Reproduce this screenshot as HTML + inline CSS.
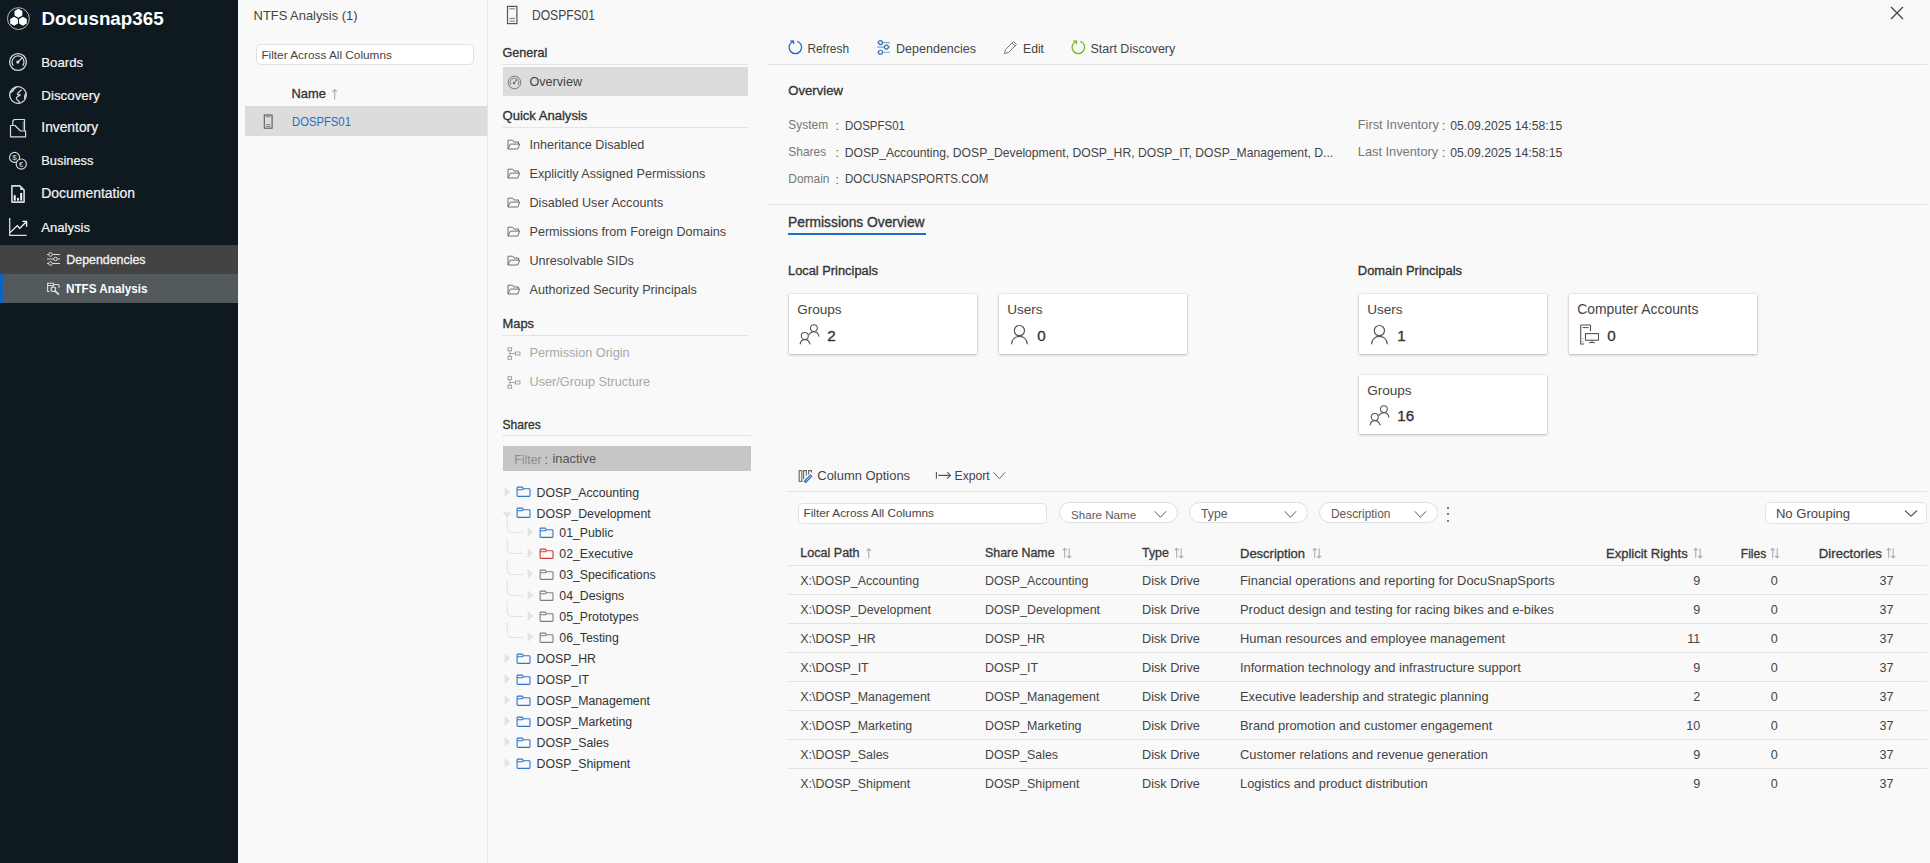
<!DOCTYPE html>
<html><head><meta charset="utf-8"><title>Docusnap365 - NTFS Analysis</title>
<style>
html,body{margin:0;padding:0;width:1930px;height:863px;overflow:hidden;background:#f9f9f9;font-family:"Liberation Sans",sans-serif;}
.t{position:absolute;white-space:nowrap;line-height:1;}
.r{position:absolute;display:block;}
</style></head><body>
<div class="r" style="left:0px;top:0px;width:238px;height:863px;background:#0e1a1f"></div>
<svg class="r" style="left:6px;top:6px" width="26" height="26" viewBox="0 0 26 26" fill="none"><circle cx="12.4" cy="12.6" r="10.9" stroke="#b8bcbe" stroke-width="1"/>
<path d="M12.40 2.80 L16.30 5.05 L16.30 9.55 L12.40 11.80 L8.50 9.55 L8.50 5.05Z" fill="#fff"/><path d="M8.10 10.80 L12.00 13.05 L12.00 17.55 L8.10 19.80 L4.20 17.55 L4.20 13.05Z" fill="#fff"/><path d="M16.90 10.80 L20.80 13.05 L20.80 17.55 L16.90 19.80 L13.00 17.55 L13.00 13.05Z" fill="#fff"/></svg>
<div class="t" style="left:41.5px;top:9.99px;font-size:18.8px;color:#ffffff;font-weight:700;">Docusnap365</div>
<div class="t" style="left:41.3px;top:55.93px;font-size:13.2px;color:#f4f4f4;font-weight:400;-webkit-text-stroke:0.2px currentColor;">Boards</div>
<div class="t" style="left:41.3px;top:88.80px;font-size:13.35px;color:#f4f4f4;font-weight:400;-webkit-text-stroke:0.2px currentColor;">Discovery</div>
<div class="t" style="left:41.3px;top:121.42px;font-size:13.8px;color:#f4f4f4;font-weight:400;-webkit-text-stroke:0.2px currentColor;">Inventory</div>
<div class="t" style="left:41.3px;top:155.22px;font-size:12.85px;color:#f4f4f4;font-weight:400;-webkit-text-stroke:0.2px currentColor;">Business</div>
<div class="t" style="left:41.3px;top:187.29px;font-size:13.95px;color:#f4f4f4;font-weight:400;-webkit-text-stroke:0.2px currentColor;">Documentation</div>
<div class="t" style="left:41.3px;top:221.01px;font-size:13.1px;color:#f4f4f4;font-weight:400;-webkit-text-stroke:0.2px currentColor;">Analysis</div>
<svg class="r" style="left:8px;top:52px" width="20" height="20" viewBox="0 0 20 20" fill="none"><circle cx="10" cy="10" r="8.4" stroke="#d9dcdd" stroke-width="1.3"/>
<path d="M5.3 13.7 A6 6 0 1 1 14.7 13.7" stroke="#d9dcdd" stroke-width="1.2"/>
<path d="M9.6 10.3 L14.8 5.4" stroke="#d9dcdd" stroke-width="1.3"/><circle cx="9.8" cy="10.1" r="1.6" fill="#d9dcdd"/></svg>
<svg class="r" style="left:8px;top:85px" width="20" height="20" viewBox="0 0 20 20" fill="none"><circle cx="10" cy="10" r="8.3" stroke="#d9dcdd" stroke-width="1.3"/>
<path d="M2.3 7.6 C3.8 7 5.2 6.3 5.6 4.6 C6 3.4 7.2 2.6 8.6 2" stroke="#d9dcdd" stroke-width="1.5"/>
<path d="M13.6 4.8 C12.2 5.8 11 7.2 9.6 8.6 C8.9 9.4 9.8 10.2 11 9.7 C12 9.4 12.6 9.9 11.6 10.6 C10.2 11.5 8.6 11.8 8.3 13.2 C8 14.8 10.2 15.2 11 16.4 C11.5 17.2 11.5 17.8 11.6 18.3" stroke="#d9dcdd" stroke-width="1.2"/>
<path d="M17.8 8.6 C16.6 10 16.2 12.2 17.2 14.2" stroke="#d9dcdd" stroke-width="1.2"/></svg>
<svg class="r" style="left:9px;top:118px" width="18" height="20" viewBox="0 0 18 20" fill="none"><path d="M1.5 7.5 H6 L11.5 13 H16.6 V18.8 H1.5 Z" stroke="#d9dcdd" stroke-width="1.2" stroke-linejoin="round"/>
<path d="M3.8 7.5 V3 L5.3 1.5 H15.5 V13" stroke="#d9dcdd" stroke-width="1.2" stroke-linejoin="round"/><path d="M14.2 3.2 V12.5" stroke="#8a8f91" stroke-width="0.9"/></svg>
<svg class="r" style="left:8px;top:151px" width="20" height="20" viewBox="0 0 20 20" fill="none"><circle cx="6.56" cy="6.4" r="5" stroke="#d9dcdd" stroke-width="1.1"/>
<circle cx="13.27" cy="13.05" r="5.1" stroke="#d9dcdd" stroke-width="1.1" fill="#0e1a1f"/>
<text x="6.6" y="9.3" font-size="8" text-anchor="middle" fill="#d9dcdd" font-family="Liberation Sans">$</text>
<text x="13.1" y="15.9" font-size="7.6" text-anchor="middle" fill="#d9dcdd" font-family="Liberation Sans">€</text></svg>
<svg class="r" style="left:10px;top:184px" width="16" height="20" viewBox="0 0 16 20" fill="none"><path d="M1.9 1.9 H9.8 L14.1 6.1 V18.1 H1.9 Z" stroke="#d9dcdd" stroke-width="1.6" stroke-linejoin="round"/>
<path d="M10.2 2.6 L13.4 5.9 H10.2 Z" fill="#d9dcdd"/>
<rect x="3.7" y="11.2" width="2" height="5.4" fill="#fff"/><rect x="7" y="13.9" width="1.9" height="2.7" fill="#fff"/><rect x="10.2" y="9" width="2" height="7.6" fill="#fff"/></svg>
<svg class="r" style="left:8px;top:217px" width="20" height="20" viewBox="0 0 20 20" fill="none"><path d="M1.7 1 V18.3 H18.7" stroke="#d9dcdd" stroke-width="1.3"/>
<path d="M2 15.6 L9.35 8.65 L11.75 11.4 L18.1 5" stroke="#fff" stroke-width="1.3"/><path d="M14.5 4.4 H18.6 V9.7" stroke="#fff" stroke-width="1.3"/></svg>
<div class="r" style="left:0px;top:245px;width:238px;height:29px;background:#434343"></div>
<div class="r" style="left:0px;top:274px;width:238px;height:29px;background:#535a5d"></div>
<div class="r" style="left:0px;top:274px;width:3px;height:29px;background:#0b63c4"></div>
<svg class="r" style="left:46px;top:252px" width="15" height="15" viewBox="0 0 15 15" fill="none"><path d="M1 2.5 H14 M1 7 H14 M1 11.5 H14" stroke="#d9dcdd" stroke-width="1"/>
<circle cx="4.5" cy="2.5" r="1.8" fill="#434343" stroke="#d9dcdd" stroke-width="1"/>
<circle cx="9.5" cy="7" r="1.8" fill="#434343" stroke="#d9dcdd" stroke-width="1"/>
<circle cx="4.5" cy="11.5" r="1.8" fill="#434343" stroke="#d9dcdd" stroke-width="1"/></svg>
<div class="t" style="left:66.3px;top:254.20px;font-size:12.4px;color:#f2f2f2;font-weight:400;-webkit-text-stroke:0.32px currentColor;">Dependencies</div>
<svg class="r" style="left:46px;top:281px" width="15" height="15" viewBox="0 0 15 15" fill="none"><path d="M3.6 10.5 H1.6 V2.2 H7.5 V4.5 H1.6" stroke="#d9dcdd" stroke-width="1.1" stroke-linejoin="round"/>
<path d="M7.5 3.5 H12 Q13 3.5 13 4.5 V6.8" stroke="#d9dcdd" stroke-width="1.1"/>
<circle cx="7.3" cy="8.2" r="2.3" stroke="#d9dcdd" stroke-width="1.1"/><path d="M9 10 L12.4 13.1" stroke="#d9dcdd" stroke-width="1.8" stroke-linecap="round"/></svg>
<div class="t" style="left:66.3px;top:282.79px;font-size:12.3px;color:#ffffff;font-weight:700;transform:scaleX(0.951);transform-origin:0 0;">NTFS Analysis</div>
<div class="r" style="left:238px;top:0px;width:249px;height:863px;background:#f9f9f9"></div>
<div class="r" style="left:487px;top:0px;width:1px;height:863px;background:#e6e6e6"></div>
<div class="t" style="left:253.6px;top:9.78px;font-size:12.9px;color:#444;font-weight:400;">NTFS Analysis (1)</div>
<div class="r" style="left:255.5px;top:43.5px;width:218px;height:21px;background:#fff;border:1px solid #e2e2e2;border-radius:5px;box-sizing:border-box"></div>
<div class="t" style="left:261.4px;top:49.91px;font-size:11.8px;color:#444;font-weight:400;">Filter Across All Columns</div>
<div class="t" style="left:291.5px;top:87.58px;font-size:12.9px;color:#333333;font-weight:400;-webkit-text-stroke:0.32px currentColor;">Name</div>
<svg class="r" style="left:330px;top:88px" width="9" height="12" viewBox="0 0 9 12" fill="none"><path d="M4.7 11.5 V1.6 M2.5 3.8 L4.7 1.5 L6.9 3.8" stroke="#b0b0b0" stroke-width="1.2"/></svg>
<div class="r" style="left:245px;top:106px;width:242px;height:29.6px;background:#dcdcdc"></div>
<svg class="r" style="left:263px;top:113.5px" width="10" height="15" viewBox="0 0 10 15" fill="none"><rect x="1.3" y="1" width="7.8" height="13.2" stroke="#5a5a5a" stroke-width="1.1"/><path d="M3 2.7 H7.4 M3 10.6 H7.4 M3 12.4 H7.4" stroke="#777" stroke-width="0.9"/></svg>
<div class="t" style="left:291.5px;top:116.20px;font-size:12.4px;color:#1f6fc6;font-weight:400;transform:scaleX(0.91);transform-origin:0 0;">DOSPFS01</div>
<svg class="r" style="left:506px;top:5px" width="12" height="20" viewBox="0 0 12 20" fill="none"><rect x="1.5" y="1.4" width="9.4" height="17.2" stroke="#555" stroke-width="1.2"/><path d="M3.4 3.8 H9 M3.4 13.4 H9 M3.4 16.1 H9" stroke="#777" stroke-width="1"/></svg>
<div class="t" style="left:531.7px;top:7.68px;font-size:14.2px;color:#444;font-weight:400;transform:scaleX(0.85);transform-origin:0 0;">DOSPFS01</div>
<div class="t" style="left:502.5px;top:46.53px;font-size:12.6px;color:#333333;font-weight:400;-webkit-text-stroke:0.32px currentColor;">General</div>
<div class="r" style="left:502px;top:64px;width:246px;height:1px;background:#e3e3e3"></div>
<div class="r" style="left:503px;top:67px;width:245px;height:29px;background:#dcdcdc"></div>
<svg class="r" style="left:506.5px;top:74.5px" width="15" height="15" viewBox="0 0 15 15" fill="none"><circle cx="7.5" cy="7.5" r="6.3" stroke="#777" stroke-width="1"/><path d="M3.8 10 A4.4 4.4 0 1 1 11.2 10" stroke="#777" stroke-width="0.9"/><path d="M7 8 L10 4.5" stroke="#666" stroke-width="1.1"/><circle cx="7" cy="8.2" r="1.1" fill="#666"/></svg>
<div class="t" style="left:529.5px;top:76.03px;font-size:12.6px;color:#444;font-weight:400;">Overview</div>
<div class="t" style="left:502.5px;top:109.15px;font-size:13.05px;color:#333333;font-weight:400;-webkit-text-stroke:0.32px currentColor;">Quick Analysis</div>
<div class="r" style="left:502px;top:127px;width:246px;height:1px;background:#e3e3e3"></div>
<svg class="r" style="left:507px;top:139.29999999999998px" width="14" height="12" viewBox="0 0 14 12" fill="none"><path d="M1 10 V1.2 H5.7 L7 3 H11.5 V5.1 M1 10 L3.3 5.1 H12.7 L10.8 10 Z" stroke="#6e6e6e" stroke-width="1" stroke-linejoin="round"/></svg>
<div class="t" style="left:529.5px;top:139.13px;font-size:12.6px;color:#444;font-weight:400;">Inheritance Disabled</div>
<svg class="r" style="left:507px;top:168.29999999999998px" width="14" height="12" viewBox="0 0 14 12" fill="none"><path d="M1 10 V1.2 H5.7 L7 3 H11.5 V5.1 M1 10 L3.3 5.1 H12.7 L10.8 10 Z" stroke="#6e6e6e" stroke-width="1" stroke-linejoin="round"/></svg>
<div class="t" style="left:529.5px;top:168.13px;font-size:12.6px;color:#444;font-weight:400;">Explicitly Assigned Permissions</div>
<svg class="r" style="left:507px;top:197.29999999999998px" width="14" height="12" viewBox="0 0 14 12" fill="none"><path d="M1 10 V1.2 H5.7 L7 3 H11.5 V5.1 M1 10 L3.3 5.1 H12.7 L10.8 10 Z" stroke="#6e6e6e" stroke-width="1" stroke-linejoin="round"/></svg>
<div class="t" style="left:529.5px;top:197.13px;font-size:12.6px;color:#444;font-weight:400;">Disabled User Accounts</div>
<svg class="r" style="left:507px;top:226.29999999999998px" width="14" height="12" viewBox="0 0 14 12" fill="none"><path d="M1 10 V1.2 H5.7 L7 3 H11.5 V5.1 M1 10 L3.3 5.1 H12.7 L10.8 10 Z" stroke="#6e6e6e" stroke-width="1" stroke-linejoin="round"/></svg>
<div class="t" style="left:529.5px;top:226.13px;font-size:12.6px;color:#444;font-weight:400;">Permissions from Foreign Domains</div>
<svg class="r" style="left:507px;top:255.3px" width="14" height="12" viewBox="0 0 14 12" fill="none"><path d="M1 10 V1.2 H5.7 L7 3 H11.5 V5.1 M1 10 L3.3 5.1 H12.7 L10.8 10 Z" stroke="#6e6e6e" stroke-width="1" stroke-linejoin="round"/></svg>
<div class="t" style="left:529.5px;top:255.13px;font-size:12.6px;color:#444;font-weight:400;">Unresolvable SIDs</div>
<svg class="r" style="left:507px;top:284.3px" width="14" height="12" viewBox="0 0 14 12" fill="none"><path d="M1 10 V1.2 H5.7 L7 3 H11.5 V5.1 M1 10 L3.3 5.1 H12.7 L10.8 10 Z" stroke="#6e6e6e" stroke-width="1" stroke-linejoin="round"/></svg>
<div class="t" style="left:529.5px;top:284.13px;font-size:12.6px;color:#444;font-weight:400;">Authorized Security Principals</div>
<div class="t" style="left:502.5px;top:318.08px;font-size:12.9px;color:#333333;font-weight:400;-webkit-text-stroke:0.32px currentColor;">Maps</div>
<div class="r" style="left:502px;top:335px;width:246px;height:1px;background:#e3e3e3"></div>
<svg class="r" style="left:506.5px;top:346.6px" width="14" height="13" viewBox="0 0 14 13" fill="none"><rect x="1" y="0.7" width="3.6" height="3" stroke="#999" stroke-width="0.9"/><rect x="1" y="9.3" width="3.6" height="3" stroke="#999" stroke-width="0.9"/><rect x="8.5" y="5" width="4.5" height="3" stroke="#999" stroke-width="0.9"/><path d="M2.8 3.7 V9.3 M2.8 6.5 H8.5" stroke="#999" stroke-width="0.9"/></svg>
<div class="t" style="left:529.5px;top:347.25px;font-size:12.7px;color:#a8a8a8;font-weight:400;">Permission Origin</div>
<svg class="r" style="left:506.5px;top:375.6px" width="14" height="13" viewBox="0 0 14 13" fill="none"><rect x="1" y="0.7" width="3.6" height="3" stroke="#999" stroke-width="0.9"/><rect x="1" y="9.3" width="3.6" height="3" stroke="#999" stroke-width="0.9"/><rect x="8.5" y="5" width="4.5" height="3" stroke="#999" stroke-width="0.9"/><path d="M2.8 3.7 V9.3 M2.8 6.5 H8.5" stroke="#999" stroke-width="0.9"/></svg>
<div class="t" style="left:529.5px;top:376.25px;font-size:12.7px;color:#a8a8a8;font-weight:400;">User/Group Structure</div>
<div class="t" style="left:502.5px;top:418.60px;font-size:12.05px;color:#333333;font-weight:400;-webkit-text-stroke:0.32px currentColor;">Shares</div>
<div class="r" style="left:502px;top:435px;width:249px;height:1px;background:#e3e3e3"></div>
<div class="r" style="left:503px;top:446px;width:248px;height:25px;background:#c6c6c6"></div>
<div class="t" style="left:514.3px;top:453.89px;font-size:12.3px;color:#8e8e8e;font-weight:400;">Filter</div>
<div class="t" style="left:544.6px;top:453.89px;font-size:12.3px;color:#555;font-weight:400;">:</div>
<div class="t" style="left:552.4px;top:453.38px;font-size:12.9px;color:#555;font-weight:400;">inactive</div>
<svg class="r" style="left:516px;top:486.2px" width="16" height="13" viewBox="0 0 16 13" fill="none"><path d="M1.1 9.4 V2 Q1.1 1.1 2.1 1.1 H6.3 L7.4 2.8 H13.2 Q14 2.8 14 3.7 V9.4 Q14 10.4 13 10.4 H2.1 Q1.1 10.4 1.1 9.4 Z M1.1 3.7 H6.5 L7.4 2.8" stroke="#2f76cc" stroke-width="1.1" stroke-linejoin="round"/></svg>
<div class="t" style="left:536.5px;top:486.99px;font-size:12.3px;color:#333333;font-weight:400;">DOSP_Accounting</div>
<svg class="r" style="left:516px;top:507.4px" width="16" height="13" viewBox="0 0 16 13" fill="none"><path d="M1.1 9.4 V2 Q1.1 1.1 2.1 1.1 H6.3 L7.4 2.8 H13.2 Q14 2.8 14 3.7 V9.4 Q14 10.4 13 10.4 H2.1 Q1.1 10.4 1.1 9.4 Z M1.1 3.7 H6.5 L7.4 2.8" stroke="#2f76cc" stroke-width="1.1" stroke-linejoin="round"/></svg>
<div class="t" style="left:536.5px;top:508.19px;font-size:12.3px;color:#333333;font-weight:400;">DOSP_Development</div>
<svg class="r" style="left:503.5px;top:487px" width="7" height="11" viewBox="0 0 7 11" fill="none"><path d="M0.6 0 L6.2 5 L0.6 10 Z" fill="#e3e3e3"/></svg>
<svg class="r" style="left:502px;top:510.5px" width="10" height="8" viewBox="0 0 10 8" fill="none"><path d="M0.4 1.2 L9.6 1.2 L5 6.3 Z" fill="#e3e3e3"/></svg>
<svg class="r" style="left:527px;top:527px" width="7" height="11" viewBox="0 0 7 11" fill="none"><path d="M0.6 0 L6.2 5 L0.6 10 Z" fill="#e3e3e3"/></svg>
<svg class="r" style="left:539.1px;top:526.5px" width="16" height="13" viewBox="0 0 16 13" fill="none"><path d="M1.1 9.4 V2 Q1.1 1.1 2.1 1.1 H6.3 L7.4 2.8 H13.2 Q14 2.8 14 3.7 V9.4 Q14 10.4 13 10.4 H2.1 Q1.1 10.4 1.1 9.4 Z M1.1 3.7 H6.5 L7.4 2.8" stroke="#2f76cc" stroke-width="1.1" stroke-linejoin="round"/></svg>
<div class="t" style="left:559.3px;top:527.29px;font-size:12.3px;color:#333333;font-weight:400;">01_Public</div>
<svg class="r" style="left:506px;top:512px" width="20" height="22" viewBox="0 0 20 22" fill="none"><path d="M1.2 3.8 V15.2 Q1.2 20.5 6.5 20.5 H16.8" stroke="#e0e0e0" stroke-width="1"/></svg>
<svg class="r" style="left:527px;top:548px" width="7" height="11" viewBox="0 0 7 11" fill="none"><path d="M0.6 0 L6.2 5 L0.6 10 Z" fill="#e3e3e3"/></svg>
<svg class="r" style="left:539.1px;top:547.5px" width="16" height="13" viewBox="0 0 16 13" fill="none"><path d="M1.1 9.4 V2 Q1.1 1.1 2.1 1.1 H6.3 L7.4 2.8 H13.2 Q14 2.8 14 3.7 V9.4 Q14 10.4 13 10.4 H2.1 Q1.1 10.4 1.1 9.4 Z M1.1 3.7 H6.5 L7.4 2.8" stroke="#c93b3b" stroke-width="1.1" stroke-linejoin="round"/></svg>
<div class="t" style="left:559.3px;top:548.29px;font-size:12.3px;color:#333333;font-weight:400;">02_Executive</div>
<svg class="r" style="left:506px;top:533px" width="20" height="22" viewBox="0 0 20 22" fill="none"><path d="M1.2 5 V15.2 Q1.2 20.5 6.5 20.5 H16.8" stroke="#e0e0e0" stroke-width="1"/></svg>
<svg class="r" style="left:527px;top:569px" width="7" height="11" viewBox="0 0 7 11" fill="none"><path d="M0.6 0 L6.2 5 L0.6 10 Z" fill="#e3e3e3"/></svg>
<svg class="r" style="left:539.1px;top:568.5px" width="16" height="13" viewBox="0 0 16 13" fill="none"><path d="M1.1 9.4 V2 Q1.1 1.1 2.1 1.1 H6.3 L7.4 2.8 H13.2 Q14 2.8 14 3.7 V9.4 Q14 10.4 13 10.4 H2.1 Q1.1 10.4 1.1 9.4 Z M1.1 3.7 H6.5 L7.4 2.8" stroke="#7d7d7d" stroke-width="1.1" stroke-linejoin="round"/></svg>
<div class="t" style="left:559.3px;top:569.29px;font-size:12.3px;color:#333333;font-weight:400;">03_Specifications</div>
<svg class="r" style="left:506px;top:554px" width="20" height="22" viewBox="0 0 20 22" fill="none"><path d="M1.2 5 V15.2 Q1.2 20.5 6.5 20.5 H16.8" stroke="#e0e0e0" stroke-width="1"/></svg>
<svg class="r" style="left:527px;top:590px" width="7" height="11" viewBox="0 0 7 11" fill="none"><path d="M0.6 0 L6.2 5 L0.6 10 Z" fill="#e3e3e3"/></svg>
<svg class="r" style="left:539.1px;top:589.5px" width="16" height="13" viewBox="0 0 16 13" fill="none"><path d="M1.1 9.4 V2 Q1.1 1.1 2.1 1.1 H6.3 L7.4 2.8 H13.2 Q14 2.8 14 3.7 V9.4 Q14 10.4 13 10.4 H2.1 Q1.1 10.4 1.1 9.4 Z M1.1 3.7 H6.5 L7.4 2.8" stroke="#7d7d7d" stroke-width="1.1" stroke-linejoin="round"/></svg>
<div class="t" style="left:559.3px;top:590.29px;font-size:12.3px;color:#333333;font-weight:400;">04_Designs</div>
<svg class="r" style="left:506px;top:575px" width="20" height="22" viewBox="0 0 20 22" fill="none"><path d="M1.2 5 V15.2 Q1.2 20.5 6.5 20.5 H16.8" stroke="#e0e0e0" stroke-width="1"/></svg>
<svg class="r" style="left:527px;top:611px" width="7" height="11" viewBox="0 0 7 11" fill="none"><path d="M0.6 0 L6.2 5 L0.6 10 Z" fill="#e3e3e3"/></svg>
<svg class="r" style="left:539.1px;top:610.5px" width="16" height="13" viewBox="0 0 16 13" fill="none"><path d="M1.1 9.4 V2 Q1.1 1.1 2.1 1.1 H6.3 L7.4 2.8 H13.2 Q14 2.8 14 3.7 V9.4 Q14 10.4 13 10.4 H2.1 Q1.1 10.4 1.1 9.4 Z M1.1 3.7 H6.5 L7.4 2.8" stroke="#7d7d7d" stroke-width="1.1" stroke-linejoin="round"/></svg>
<div class="t" style="left:559.3px;top:611.29px;font-size:12.3px;color:#333333;font-weight:400;">05_Prototypes</div>
<svg class="r" style="left:506px;top:596px" width="20" height="22" viewBox="0 0 20 22" fill="none"><path d="M1.2 5 V15.2 Q1.2 20.5 6.5 20.5 H16.8" stroke="#e0e0e0" stroke-width="1"/></svg>
<svg class="r" style="left:527px;top:632px" width="7" height="11" viewBox="0 0 7 11" fill="none"><path d="M0.6 0 L6.2 5 L0.6 10 Z" fill="#e3e3e3"/></svg>
<svg class="r" style="left:539.1px;top:631.5px" width="16" height="13" viewBox="0 0 16 13" fill="none"><path d="M1.1 9.4 V2 Q1.1 1.1 2.1 1.1 H6.3 L7.4 2.8 H13.2 Q14 2.8 14 3.7 V9.4 Q14 10.4 13 10.4 H2.1 Q1.1 10.4 1.1 9.4 Z M1.1 3.7 H6.5 L7.4 2.8" stroke="#7d7d7d" stroke-width="1.1" stroke-linejoin="round"/></svg>
<div class="t" style="left:559.3px;top:632.29px;font-size:12.3px;color:#333333;font-weight:400;">06_Testing</div>
<svg class="r" style="left:506px;top:617px" width="20" height="22" viewBox="0 0 20 22" fill="none"><path d="M1.2 5 V15.2 Q1.2 20.5 6.5 20.5 H16.8" stroke="#e0e0e0" stroke-width="1"/></svg>
<svg class="r" style="left:503.5px;top:653px" width="7" height="11" viewBox="0 0 7 11" fill="none"><path d="M0.6 0 L6.2 5 L0.6 10 Z" fill="#e3e3e3"/></svg>
<svg class="r" style="left:516px;top:652.5px" width="16" height="13" viewBox="0 0 16 13" fill="none"><path d="M1.1 9.4 V2 Q1.1 1.1 2.1 1.1 H6.3 L7.4 2.8 H13.2 Q14 2.8 14 3.7 V9.4 Q14 10.4 13 10.4 H2.1 Q1.1 10.4 1.1 9.4 Z M1.1 3.7 H6.5 L7.4 2.8" stroke="#2f76cc" stroke-width="1.1" stroke-linejoin="round"/></svg>
<div class="t" style="left:536.5px;top:653.29px;font-size:12.3px;color:#333333;font-weight:400;">DOSP_HR</div>
<svg class="r" style="left:503.5px;top:674px" width="7" height="11" viewBox="0 0 7 11" fill="none"><path d="M0.6 0 L6.2 5 L0.6 10 Z" fill="#e3e3e3"/></svg>
<svg class="r" style="left:516px;top:673.5px" width="16" height="13" viewBox="0 0 16 13" fill="none"><path d="M1.1 9.4 V2 Q1.1 1.1 2.1 1.1 H6.3 L7.4 2.8 H13.2 Q14 2.8 14 3.7 V9.4 Q14 10.4 13 10.4 H2.1 Q1.1 10.4 1.1 9.4 Z M1.1 3.7 H6.5 L7.4 2.8" stroke="#2f76cc" stroke-width="1.1" stroke-linejoin="round"/></svg>
<div class="t" style="left:536.5px;top:674.29px;font-size:12.3px;color:#333333;font-weight:400;">DOSP_IT</div>
<svg class="r" style="left:503.5px;top:695px" width="7" height="11" viewBox="0 0 7 11" fill="none"><path d="M0.6 0 L6.2 5 L0.6 10 Z" fill="#e3e3e3"/></svg>
<svg class="r" style="left:516px;top:694.5px" width="16" height="13" viewBox="0 0 16 13" fill="none"><path d="M1.1 9.4 V2 Q1.1 1.1 2.1 1.1 H6.3 L7.4 2.8 H13.2 Q14 2.8 14 3.7 V9.4 Q14 10.4 13 10.4 H2.1 Q1.1 10.4 1.1 9.4 Z M1.1 3.7 H6.5 L7.4 2.8" stroke="#2f76cc" stroke-width="1.1" stroke-linejoin="round"/></svg>
<div class="t" style="left:536.5px;top:695.29px;font-size:12.3px;color:#333333;font-weight:400;">DOSP_Management</div>
<svg class="r" style="left:503.5px;top:716px" width="7" height="11" viewBox="0 0 7 11" fill="none"><path d="M0.6 0 L6.2 5 L0.6 10 Z" fill="#e3e3e3"/></svg>
<svg class="r" style="left:516px;top:715.5px" width="16" height="13" viewBox="0 0 16 13" fill="none"><path d="M1.1 9.4 V2 Q1.1 1.1 2.1 1.1 H6.3 L7.4 2.8 H13.2 Q14 2.8 14 3.7 V9.4 Q14 10.4 13 10.4 H2.1 Q1.1 10.4 1.1 9.4 Z M1.1 3.7 H6.5 L7.4 2.8" stroke="#2f76cc" stroke-width="1.1" stroke-linejoin="round"/></svg>
<div class="t" style="left:536.5px;top:716.29px;font-size:12.3px;color:#333333;font-weight:400;">DOSP_Marketing</div>
<svg class="r" style="left:503.5px;top:737px" width="7" height="11" viewBox="0 0 7 11" fill="none"><path d="M0.6 0 L6.2 5 L0.6 10 Z" fill="#e3e3e3"/></svg>
<svg class="r" style="left:516px;top:736.5px" width="16" height="13" viewBox="0 0 16 13" fill="none"><path d="M1.1 9.4 V2 Q1.1 1.1 2.1 1.1 H6.3 L7.4 2.8 H13.2 Q14 2.8 14 3.7 V9.4 Q14 10.4 13 10.4 H2.1 Q1.1 10.4 1.1 9.4 Z M1.1 3.7 H6.5 L7.4 2.8" stroke="#2f76cc" stroke-width="1.1" stroke-linejoin="round"/></svg>
<div class="t" style="left:536.5px;top:737.29px;font-size:12.3px;color:#333333;font-weight:400;">DOSP_Sales</div>
<svg class="r" style="left:503.5px;top:758px" width="7" height="11" viewBox="0 0 7 11" fill="none"><path d="M0.6 0 L6.2 5 L0.6 10 Z" fill="#e3e3e3"/></svg>
<svg class="r" style="left:516px;top:757.5px" width="16" height="13" viewBox="0 0 16 13" fill="none"><path d="M1.1 9.4 V2 Q1.1 1.1 2.1 1.1 H6.3 L7.4 2.8 H13.2 Q14 2.8 14 3.7 V9.4 Q14 10.4 13 10.4 H2.1 Q1.1 10.4 1.1 9.4 Z M1.1 3.7 H6.5 L7.4 2.8" stroke="#2f76cc" stroke-width="1.1" stroke-linejoin="round"/></svg>
<div class="t" style="left:536.5px;top:758.29px;font-size:12.3px;color:#333333;font-weight:400;">DOSP_Shipment</div>
<svg class="r" style="left:1890px;top:6px" width="14" height="14" viewBox="0 0 14 14" fill="none"><path d="M1 1 L13 13 M13 1 L1 13" stroke="#444" stroke-width="1.3"/></svg>
<svg class="r" style="left:787px;top:39px" width="17" height="17" viewBox="0 0 17 17" fill="none"><path d="M10.2 2.3 A6.3 6.3 0 1 1 6.5 2.3" stroke="#1c6cc6" stroke-width="1.3"/><path d="M3.4 1.9 L6.5 2.2 L6.6 4.9" stroke="#1c6cc6" stroke-width="1.3"/></svg>
<div class="t" style="left:807.4px;top:43.63px;font-size:11.9px;color:#444;font-weight:400;">Refresh</div>
<svg class="r" style="left:876px;top:40px" width="15" height="15" viewBox="0 0 15 15" fill="none"><path d="M1 2.6 H14 M1 7.1 H14 M1 12.2 H14" stroke="#a0a0a0" stroke-width="1.1"/>
<circle cx="4.5" cy="2.6" r="2" fill="#f9f9f9" stroke="#1f6fc6" stroke-width="1.1"/><circle cx="10.4" cy="7.1" r="2" fill="#f9f9f9" stroke="#1f6fc6" stroke-width="1.1"/><circle cx="4.5" cy="12.2" r="2" fill="#f9f9f9" stroke="#1f6fc6" stroke-width="1.1"/></svg>
<div class="t" style="left:896.1px;top:43.12px;font-size:12.5px;color:#444;font-weight:400;">Dependencies</div>
<svg class="r" style="left:1003px;top:40px" width="15" height="15" viewBox="0 0 15 15" fill="none"><path d="M1.5 13.5 L2.5 9.5 L10.5 1.5 L13.5 4.5 L5.5 12.5 Z M9 3 L12 6" stroke="#777" stroke-width="1" stroke-linejoin="round"/></svg>
<div class="t" style="left:1023px;top:43.37px;font-size:12.2px;color:#444;font-weight:400;">Edit</div>
<svg class="r" style="left:1070.3px;top:39px" width="17" height="17" viewBox="0 0 17 17" fill="none"><path d="M10.2 2.3 A6.3 6.3 0 1 1 6.5 2.3" stroke="#78b72a" stroke-width="1.3"/><path d="M3.4 1.9 L6.5 2.2 L6.6 4.9" stroke="#78b72a" stroke-width="1.3"/></svg>
<div class="t" style="left:1090.5px;top:43.12px;font-size:12.5px;color:#444;font-weight:400;">Start Discovery</div>
<div class="r" style="left:768px;top:64px;width:1159px;height:1px;background:#e3e3e3"></div>
<div class="t" style="left:788.3px;top:83.51px;font-size:13.1px;color:#333333;font-weight:400;-webkit-text-stroke:0.32px currentColor;">Overview</div>
<div class="t" style="left:788.3px;top:120.08px;font-size:11.95px;color:#777777;font-weight:400;">System</div>
<div class="t" style="left:835.6px;top:119.87px;font-size:12.2px;color:#555;font-weight:400;">:</div>
<div class="t" style="left:844.7px;top:119.70px;font-size:12.4px;color:#444;font-weight:400;transform:scaleX(0.925);transform-origin:0 0;">DOSPFS01</div>
<div class="t" style="left:788.3px;top:147.18px;font-size:11.95px;color:#777777;font-weight:400;">Shares</div>
<div class="t" style="left:835.6px;top:146.97px;font-size:12.2px;color:#555;font-weight:400;">:</div>
<div class="t" style="left:844.7px;top:147.01px;font-size:12.16px;color:#444;font-weight:400;">DOSP_Accounting, DOSP_Development, DOSP_HR, DOSP_IT, DOSP_Management, D...</div>
<div class="t" style="left:788.3px;top:173.78px;font-size:11.95px;color:#777777;font-weight:400;">Domain</div>
<div class="t" style="left:835.6px;top:173.57px;font-size:12.2px;color:#555;font-weight:400;">:</div>
<div class="t" style="left:844.7px;top:173.40px;font-size:12.4px;color:#444;font-weight:400;transform:scaleX(0.935);transform-origin:0 0;">DOCUSNAPSPORTS.COM</div>
<div class="t" style="left:1357.8px;top:119.36px;font-size:12.8px;color:#777777;font-weight:400;">First Inventory</div>
<div class="t" style="left:1442px;top:119.87px;font-size:12.2px;color:#555;font-weight:400;">:</div>
<div class="t" style="left:1450.3px;top:119.86px;font-size:12.21px;color:#444;font-weight:400;">05.09.2025 14:58:15</div>
<div class="t" style="left:1357.8px;top:146.46px;font-size:12.8px;color:#777777;font-weight:400;">Last Inventory</div>
<div class="t" style="left:1442px;top:146.97px;font-size:12.2px;color:#555;font-weight:400;">:</div>
<div class="t" style="left:1450.3px;top:146.96px;font-size:12.21px;color:#444;font-weight:400;">05.09.2025 14:58:15</div>
<div class="r" style="left:768px;top:204px;width:1159px;height:1px;background:#e3e3e3"></div>
<div class="t" style="left:788.1px;top:216.22px;font-size:13.8px;color:#333333;font-weight:400;-webkit-text-stroke:0.32px currentColor;">Permissions Overview</div>
<div class="r" style="left:788px;top:233px;width:138px;height:2px;background:#1f6fc6"></div>
<div class="t" style="left:788px;top:264.82px;font-size:12.85px;color:#333333;font-weight:400;-webkit-text-stroke:0.32px currentColor;">Local Principals</div>
<div class="t" style="left:1357.8px;top:264.74px;font-size:12.95px;color:#333333;font-weight:400;-webkit-text-stroke:0.32px currentColor;">Domain Principals</div>
<div class="r" style="left:788.7px;top:294px;width:188.6px;height:59.5px;background:#fff;box-shadow:0 1.2px 2.6px rgba(0,0,0,0.26), 0 0 1.5px rgba(0,0,0,0.12)"></div>
<div class="t" style="left:797.2px;top:302.83px;font-size:13.55px;color:#444;font-weight:400;">Groups</div>
<svg class="r" style="left:798.7px;top:324px" width="21" height="22" viewBox="0 0 21 22" fill="none"><circle cx="14.9" cy="4.1" r="3.4" stroke="#555" stroke-width="1.1"/><path d="M9.8 10.8 C11 8.7 12.6 7.7 14.9 7.7 C17.6 7.7 19.6 9.8 20 12.7" stroke="#555" stroke-width="1.1"/><circle cx="5.8" cy="12" r="3.5" stroke="#555" stroke-width="1.1"/><path d="M1 20.4 C1.5 17.2 3.3 15.6 5.8 15.6 C8.4 15.6 10.3 17.3 11.2 20.4" stroke="#555" stroke-width="1.1"/></svg>
<div class="t" style="left:827.3000000000001px;top:327.63px;font-size:15.2px;color:#333333;font-weight:400;-webkit-text-stroke:0.55px currentColor;-webkit-text-stroke:0.32px currentColor;">2</div>
<div class="r" style="left:998.7px;top:294px;width:188.6px;height:59.5px;background:#fff;box-shadow:0 1.2px 2.6px rgba(0,0,0,0.26), 0 0 1.5px rgba(0,0,0,0.12)"></div>
<div class="t" style="left:1007.2px;top:302.83px;font-size:13.55px;color:#444;font-weight:400;">Users</div>
<svg class="r" style="left:1008.7px;top:324px" width="21" height="22" viewBox="0 0 21 22" fill="none"><circle cx="10.4" cy="6.6" r="5.1" stroke="#555" stroke-width="1.2"/><path d="M2.5 20.3 C3 15.5 6.2 12.4 10.4 12.4 C14.6 12.4 17.8 15.5 18.4 20.3" stroke="#555" stroke-width="1.2"/></svg>
<div class="t" style="left:1037.3px;top:327.63px;font-size:15.2px;color:#333333;font-weight:400;-webkit-text-stroke:0.55px currentColor;-webkit-text-stroke:0.32px currentColor;">0</div>
<div class="r" style="left:1358.7px;top:294px;width:188.6px;height:59.5px;background:#fff;box-shadow:0 1.2px 2.6px rgba(0,0,0,0.26), 0 0 1.5px rgba(0,0,0,0.12)"></div>
<div class="t" style="left:1367.2px;top:302.83px;font-size:13.55px;color:#444;font-weight:400;">Users</div>
<svg class="r" style="left:1368.7px;top:324px" width="21" height="22" viewBox="0 0 21 22" fill="none"><circle cx="10.4" cy="6.6" r="5.1" stroke="#555" stroke-width="1.2"/><path d="M2.5 20.3 C3 15.5 6.2 12.4 10.4 12.4 C14.6 12.4 17.8 15.5 18.4 20.3" stroke="#555" stroke-width="1.2"/></svg>
<div class="t" style="left:1397.3px;top:327.63px;font-size:15.2px;color:#333333;font-weight:400;-webkit-text-stroke:0.55px currentColor;-webkit-text-stroke:0.32px currentColor;">1</div>
<div class="r" style="left:1568.7px;top:294px;width:188.6px;height:59.5px;background:#fff;box-shadow:0 1.2px 2.6px rgba(0,0,0,0.26), 0 0 1.5px rgba(0,0,0,0.12)"></div>
<div class="t" style="left:1577.2px;top:302.53px;font-size:13.9px;color:#444;font-weight:400;">Computer Accounts</div>
<svg class="r" style="left:1578.7px;top:324px" width="21" height="22" viewBox="0 0 21 22" fill="none"><path d="M5.2 20 H1.7 V1.6 Q1.7 1 2.3 1 H11 Q11.5 1 11.5 1.6 V7.3" stroke="#555" stroke-width="1.1"/><path d="M3.5 3.6 H9.7" stroke="#555" stroke-width="1"/><rect x="6.5" y="9.6" width="13" height="6.6" stroke="#555" stroke-width="1.1"/><path d="M13 16.2 V18.5 M10 18.6 H16" stroke="#555" stroke-width="1"/><path d="M4 14.3 V15.3 M4 17.2 V18.2" stroke="#777" stroke-width="0.9"/></svg>
<div class="t" style="left:1607.3px;top:327.63px;font-size:15.2px;color:#333333;font-weight:400;-webkit-text-stroke:0.55px currentColor;-webkit-text-stroke:0.32px currentColor;">0</div>
<div class="r" style="left:1358.7px;top:374.8px;width:188.6px;height:59.5px;background:#fff;box-shadow:0 1.2px 2.6px rgba(0,0,0,0.26), 0 0 1.5px rgba(0,0,0,0.12)"></div>
<div class="t" style="left:1367.2px;top:383.63px;font-size:13.55px;color:#444;font-weight:400;">Groups</div>
<svg class="r" style="left:1368.7px;top:404.8px" width="21" height="22" viewBox="0 0 21 22" fill="none"><circle cx="14.9" cy="4.1" r="3.4" stroke="#555" stroke-width="1.1"/><path d="M9.8 10.8 C11 8.7 12.6 7.7 14.9 7.7 C17.6 7.7 19.6 9.8 20 12.7" stroke="#555" stroke-width="1.1"/><circle cx="5.8" cy="12" r="3.5" stroke="#555" stroke-width="1.1"/><path d="M1 20.4 C1.5 17.2 3.3 15.6 5.8 15.6 C8.4 15.6 10.3 17.3 11.2 20.4" stroke="#555" stroke-width="1.1"/></svg>
<div class="t" style="left:1397.3px;top:408.43px;font-size:15.2px;color:#333333;font-weight:400;-webkit-text-stroke:0.55px currentColor;-webkit-text-stroke:0.32px currentColor;">16</div>
<svg class="r" style="left:797px;top:469px" width="17" height="15" viewBox="0 0 17 15" fill="none"><rect x="2.2" y="1.6" width="2.6" height="10.8" stroke="#666" stroke-width="1.1"/><path d="M6.6 10.2 V1.6 H9.4 V6.5 M11.6 5.5 V1.6 H14.5 V3.6" stroke="#666" stroke-width="1.1"/><path d="M7.6 13.2 L14.5 6.3" stroke="#1c6cc6" stroke-width="3"/><path d="M8.4 12.4 L14 6.8" stroke="#cfe0f5" stroke-width="0.9"/></svg>
<div class="t" style="left:817.3px;top:469.74px;font-size:12.95px;color:#444;font-weight:400;">Column Options</div>
<svg class="r" style="left:935px;top:469px" width="17" height="12" viewBox="0 0 17 12" fill="none"><path d="M1.4 3 V9.8 M3.3 6.4 H15.4 M12.2 3.2 L15.5 6.4 L12.2 9.7" stroke="#555" stroke-width="1.1"/></svg>
<div class="t" style="left:954.5px;top:470.37px;font-size:12.2px;color:#444;font-weight:400;">Export</div>
<svg class="r" style="left:993px;top:471px" width="13" height="9" viewBox="0 0 13 9" fill="none"><path d="M0.6 1.3 L6.4 7.7 L12.2 1.3" stroke="#666" stroke-width="1"/></svg>
<div class="r" style="left:788px;top:491px;width:1139px;height:1px;background:#e3e3e3"></div>
<div class="r" style="left:797.5px;top:502.5px;width:249px;height:21.5px;background:#fff;border:1px solid #e2e2e2;border-radius:5px;box-sizing:border-box"></div>
<div class="t" style="left:803.5px;top:508.41px;font-size:11.8px;color:#444;font-weight:400;">Filter Across All Columns</div>
<div class="r" style="left:1058.5px;top:502.3px;width:119px;height:21px;background:#fff;border:1px solid #dedede;border-radius:11px;box-sizing:border-box"></div>
<div class="t" style="left:1071.0px;top:508.78px;font-size:11.6px;color:#5a5a5a;font-weight:400;">Share Name</div>
<svg class="r" style="left:1154.3px;top:510.2px" width="13" height="9" viewBox="0 0 13 9" fill="none"><path d="M0.8 1.3 L6.4 7.3 L12 1.3" stroke="#555" stroke-width="1"/></svg>
<div class="r" style="left:1188.5px;top:502.3px;width:119px;height:21px;background:#fff;border:1px solid #dedede;border-radius:11px;box-sizing:border-box"></div>
<div class="t" style="left:1201.0px;top:508.19px;font-size:12.3px;color:#5a5a5a;font-weight:400;">Type</div>
<svg class="r" style="left:1284.3px;top:510.2px" width="13" height="9" viewBox="0 0 13 9" fill="none"><path d="M0.8 1.3 L6.4 7.3 L12 1.3" stroke="#555" stroke-width="1"/></svg>
<div class="r" style="left:1318.5px;top:502.3px;width:119px;height:21px;background:#fff;border:1px solid #dedede;border-radius:11px;box-sizing:border-box"></div>
<div class="t" style="left:1331.0px;top:508.53px;font-size:11.9px;color:#5a5a5a;font-weight:400;">Description</div>
<svg class="r" style="left:1414.3px;top:510.2px" width="13" height="9" viewBox="0 0 13 9" fill="none"><path d="M0.8 1.3 L6.4 7.3 L12 1.3" stroke="#555" stroke-width="1"/></svg>
<div class="r" style="left:1446.8px;top:506.6px;width:2.2px;height:2.2px;background:#555;border-radius:50%"></div>
<div class="r" style="left:1446.8px;top:513.1px;width:2.2px;height:2.2px;background:#555;border-radius:50%"></div>
<div class="r" style="left:1446.8px;top:519.6px;width:2.2px;height:2.2px;background:#555;border-radius:50%"></div>
<div class="r" style="left:1764.5px;top:502.4px;width:162px;height:21.4px;background:#fff;border:1px solid #e2e2e2;border-radius:5px;box-sizing:border-box"></div>
<div class="t" style="left:1775.9px;top:507.01px;font-size:13.1px;color:#444;font-weight:400;">No Grouping</div>
<svg class="r" style="left:1904px;top:509px" width="14" height="9" viewBox="0 0 14 9" fill="none"><path d="M1 1.5 L7 7.2 L13 1.5" stroke="#555" stroke-width="1.1"/></svg>
<div class="t" style="left:800.3px;top:547.08px;font-size:12.55px;color:#383838;font-weight:400;-webkit-text-stroke:0.32px currentColor;">Local Path</div>
<svg class="r" style="left:865px;top:547px" width="8" height="12" viewBox="0 0 8 12" fill="none"><path d="M3.7 11 V1.6 M1.5 3.8 L3.7 1.5 L5.9 3.8" stroke="#b0b0b0" stroke-width="1.2"/></svg>
<div class="t" style="left:985px;top:547.20px;font-size:12.4px;color:#383838;font-weight:400;-webkit-text-stroke:0.32px currentColor;">Share Name</div>
<svg class="r" style="left:1061.5px;top:547px" width="10" height="12" viewBox="0 0 10 12" fill="none"><path d="M2.7 11 V1.4 M0.6 3.4 L2.7 1.3 L4.8 3.4 M7.2 1.3 V10.8 M5.1 8.8 L7.2 10.9 L9.3 8.8" stroke="#b3b3b3" stroke-width="1.2"/></svg>
<div class="t" style="left:1142px;top:547.20px;font-size:12.4px;color:#383838;font-weight:400;-webkit-text-stroke:0.32px currentColor;">Type</div>
<svg class="r" style="left:1174px;top:547px" width="10" height="12" viewBox="0 0 10 12" fill="none"><path d="M2.7 11 V1.4 M0.6 3.4 L2.7 1.3 L4.8 3.4 M7.2 1.3 V10.8 M5.1 8.8 L7.2 10.9 L9.3 8.8" stroke="#b3b3b3" stroke-width="1.2"/></svg>
<div class="t" style="left:1240px;top:546.70px;font-size:13.0px;color:#383838;font-weight:400;-webkit-text-stroke:0.32px currentColor;">Description</div>
<svg class="r" style="left:1311.5px;top:547px" width="10" height="12" viewBox="0 0 10 12" fill="none"><path d="M2.7 11 V1.4 M0.6 3.4 L2.7 1.3 L4.8 3.4 M7.2 1.3 V10.8 M5.1 8.8 L7.2 10.9 L9.3 8.8" stroke="#b3b3b3" stroke-width="1.2"/></svg>
<div class="t" style="left:1606px;top:546.70px;font-size:13.0px;color:#383838;font-weight:400;-webkit-text-stroke:0.32px currentColor;">Explicit Rights</div>
<svg class="r" style="left:1692.5px;top:547px" width="10" height="12" viewBox="0 0 10 12" fill="none"><path d="M2.7 11 V1.4 M0.6 3.4 L2.7 1.3 L4.8 3.4 M7.2 1.3 V10.8 M5.1 8.8 L7.2 10.9 L9.3 8.8" stroke="#b3b3b3" stroke-width="1.2"/></svg>
<div class="t" style="left:1740.8px;top:547.54px;font-size:12.0px;color:#383838;font-weight:400;-webkit-text-stroke:0.32px currentColor;">Files</div>
<svg class="r" style="left:1770.3px;top:547px" width="10" height="12" viewBox="0 0 10 12" fill="none"><path d="M2.7 11 V1.4 M0.6 3.4 L2.7 1.3 L4.8 3.4 M7.2 1.3 V10.8 M5.1 8.8 L7.2 10.9 L9.3 8.8" stroke="#b3b3b3" stroke-width="1.2"/></svg>
<div class="t" style="left:1818.8px;top:546.53px;font-size:13.2px;color:#383838;font-weight:400;-webkit-text-stroke:0.32px currentColor;">Directories</div>
<svg class="r" style="left:1886.2px;top:547px" width="10" height="12" viewBox="0 0 10 12" fill="none"><path d="M2.7 11 V1.4 M0.6 3.4 L2.7 1.3 L4.8 3.4 M7.2 1.3 V10.8 M5.1 8.8 L7.2 10.9 L9.3 8.8" stroke="#b3b3b3" stroke-width="1.2"/></svg>
<div class="r" style="left:788px;top:565px;width:1139px;height:1px;background:#e3e3e3"></div>
<div class="t" style="left:800.3px;top:575.36px;font-size:12.45px;color:#444;font-weight:400;">X:\DOSP_Accounting</div>
<div class="t" style="left:985px;top:575.40px;font-size:12.4px;color:#444;font-weight:400;">DOSP_Accounting</div>
<div class="t" style="left:1142px;top:575.15px;font-size:12.7px;color:#444;font-weight:400;">Disk Drive</div>
<div class="t" style="left:1240px;top:574.98px;font-size:12.9px;color:#444;font-weight:400;">Financial operations and reporting for DocuSnapSports</div>
<div class="t" style="right:229.79999999999995px;top:575.23px;font-size:12.6px;color:#444;font-weight:400;">9</div>
<div class="t" style="right:152.20000000000005px;top:575.23px;font-size:12.6px;color:#444;font-weight:400;">0</div>
<div class="t" style="right:36.59999999999991px;top:575.23px;font-size:12.6px;color:#444;font-weight:400;">37</div>
<div class="r" style="left:788px;top:594px;width:1139px;height:1px;background:#e3e3e3"></div>
<div class="t" style="left:800.3px;top:604.36px;font-size:12.45px;color:#444;font-weight:400;">X:\DOSP_Development</div>
<div class="t" style="left:985px;top:604.40px;font-size:12.4px;color:#444;font-weight:400;">DOSP_Development</div>
<div class="t" style="left:1142px;top:604.15px;font-size:12.7px;color:#444;font-weight:400;">Disk Drive</div>
<div class="t" style="left:1240px;top:603.98px;font-size:12.9px;color:#444;font-weight:400;">Product design and testing for racing bikes and e-bikes</div>
<div class="t" style="right:229.79999999999995px;top:604.23px;font-size:12.6px;color:#444;font-weight:400;">9</div>
<div class="t" style="right:152.20000000000005px;top:604.23px;font-size:12.6px;color:#444;font-weight:400;">0</div>
<div class="t" style="right:36.59999999999991px;top:604.23px;font-size:12.6px;color:#444;font-weight:400;">37</div>
<div class="r" style="left:788px;top:623px;width:1139px;height:1px;background:#e3e3e3"></div>
<div class="t" style="left:800.3px;top:633.36px;font-size:12.45px;color:#444;font-weight:400;">X:\DOSP_HR</div>
<div class="t" style="left:985px;top:633.40px;font-size:12.4px;color:#444;font-weight:400;">DOSP_HR</div>
<div class="t" style="left:1142px;top:633.15px;font-size:12.7px;color:#444;font-weight:400;">Disk Drive</div>
<div class="t" style="left:1240px;top:632.98px;font-size:12.9px;color:#444;font-weight:400;">Human resources and employee management</div>
<div class="t" style="right:229.79999999999995px;top:633.23px;font-size:12.6px;color:#444;font-weight:400;">11</div>
<div class="t" style="right:152.20000000000005px;top:633.23px;font-size:12.6px;color:#444;font-weight:400;">0</div>
<div class="t" style="right:36.59999999999991px;top:633.23px;font-size:12.6px;color:#444;font-weight:400;">37</div>
<div class="r" style="left:788px;top:652px;width:1139px;height:1px;background:#e3e3e3"></div>
<div class="t" style="left:800.3px;top:662.36px;font-size:12.45px;color:#444;font-weight:400;">X:\DOSP_IT</div>
<div class="t" style="left:985px;top:662.40px;font-size:12.4px;color:#444;font-weight:400;">DOSP_IT</div>
<div class="t" style="left:1142px;top:662.15px;font-size:12.7px;color:#444;font-weight:400;">Disk Drive</div>
<div class="t" style="left:1240px;top:661.98px;font-size:12.9px;color:#444;font-weight:400;">Information technology and infrastructure support</div>
<div class="t" style="right:229.79999999999995px;top:662.23px;font-size:12.6px;color:#444;font-weight:400;">9</div>
<div class="t" style="right:152.20000000000005px;top:662.23px;font-size:12.6px;color:#444;font-weight:400;">0</div>
<div class="t" style="right:36.59999999999991px;top:662.23px;font-size:12.6px;color:#444;font-weight:400;">37</div>
<div class="r" style="left:788px;top:681px;width:1139px;height:1px;background:#e3e3e3"></div>
<div class="t" style="left:800.3px;top:691.36px;font-size:12.45px;color:#444;font-weight:400;">X:\DOSP_Management</div>
<div class="t" style="left:985px;top:691.40px;font-size:12.4px;color:#444;font-weight:400;">DOSP_Management</div>
<div class="t" style="left:1142px;top:691.15px;font-size:12.7px;color:#444;font-weight:400;">Disk Drive</div>
<div class="t" style="left:1240px;top:690.98px;font-size:12.9px;color:#444;font-weight:400;">Executive leadership and strategic planning</div>
<div class="t" style="right:229.79999999999995px;top:691.23px;font-size:12.6px;color:#444;font-weight:400;">2</div>
<div class="t" style="right:152.20000000000005px;top:691.23px;font-size:12.6px;color:#444;font-weight:400;">0</div>
<div class="t" style="right:36.59999999999991px;top:691.23px;font-size:12.6px;color:#444;font-weight:400;">37</div>
<div class="r" style="left:788px;top:710px;width:1139px;height:1px;background:#e3e3e3"></div>
<div class="t" style="left:800.3px;top:720.36px;font-size:12.45px;color:#444;font-weight:400;">X:\DOSP_Marketing</div>
<div class="t" style="left:985px;top:720.40px;font-size:12.4px;color:#444;font-weight:400;">DOSP_Marketing</div>
<div class="t" style="left:1142px;top:720.15px;font-size:12.7px;color:#444;font-weight:400;">Disk Drive</div>
<div class="t" style="left:1240px;top:719.98px;font-size:12.9px;color:#444;font-weight:400;">Brand promotion and customer engagement</div>
<div class="t" style="right:229.79999999999995px;top:720.23px;font-size:12.6px;color:#444;font-weight:400;">10</div>
<div class="t" style="right:152.20000000000005px;top:720.23px;font-size:12.6px;color:#444;font-weight:400;">0</div>
<div class="t" style="right:36.59999999999991px;top:720.23px;font-size:12.6px;color:#444;font-weight:400;">37</div>
<div class="r" style="left:788px;top:739px;width:1139px;height:1px;background:#e3e3e3"></div>
<div class="t" style="left:800.3px;top:749.36px;font-size:12.45px;color:#444;font-weight:400;">X:\DOSP_Sales</div>
<div class="t" style="left:985px;top:749.40px;font-size:12.4px;color:#444;font-weight:400;">DOSP_Sales</div>
<div class="t" style="left:1142px;top:749.15px;font-size:12.7px;color:#444;font-weight:400;">Disk Drive</div>
<div class="t" style="left:1240px;top:748.98px;font-size:12.9px;color:#444;font-weight:400;">Customer relations and revenue generation</div>
<div class="t" style="right:229.79999999999995px;top:749.23px;font-size:12.6px;color:#444;font-weight:400;">9</div>
<div class="t" style="right:152.20000000000005px;top:749.23px;font-size:12.6px;color:#444;font-weight:400;">0</div>
<div class="t" style="right:36.59999999999991px;top:749.23px;font-size:12.6px;color:#444;font-weight:400;">37</div>
<div class="r" style="left:788px;top:768px;width:1139px;height:1px;background:#e3e3e3"></div>
<div class="t" style="left:800.3px;top:778.36px;font-size:12.45px;color:#444;font-weight:400;">X:\DOSP_Shipment</div>
<div class="t" style="left:985px;top:778.40px;font-size:12.4px;color:#444;font-weight:400;">DOSP_Shipment</div>
<div class="t" style="left:1142px;top:778.15px;font-size:12.7px;color:#444;font-weight:400;">Disk Drive</div>
<div class="t" style="left:1240px;top:777.98px;font-size:12.9px;color:#444;font-weight:400;">Logistics and product distribution</div>
<div class="t" style="right:229.79999999999995px;top:778.23px;font-size:12.6px;color:#444;font-weight:400;">9</div>
<div class="t" style="right:152.20000000000005px;top:778.23px;font-size:12.6px;color:#444;font-weight:400;">0</div>
<div class="t" style="right:36.59999999999991px;top:778.23px;font-size:12.6px;color:#444;font-weight:400;">37</div>
</body></html>
